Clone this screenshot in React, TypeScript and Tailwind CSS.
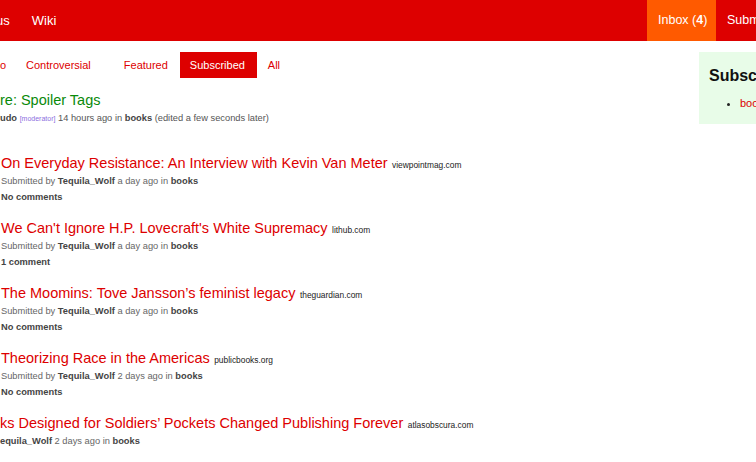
import React from "react";

const posts = [
  { title: "On Everyday Resistance: An Interview with Kevin Van Meter", domain: "viewpointmag.com", when: "a day ago", comments: "No comments" },
  { title: "We Can't Ignore H.P. Lovecraft's White Supremacy", domain: "lithub.com", when: "a day ago", comments: "1 comment" },
  { title: "The Moomins: Tove Jansson\u2019s feminist legacy", domain: "theguardian.com", when: "a day ago", comments: "No comments" },
  { title: "Theorizing Race in the Americas", domain: "publicbooks.org", when: "2 days ago", comments: "No comments" },
];

export default function App() {
  return (
    <div className="w-[756px] h-[462px] overflow-hidden bg-white text-[#333]" style={{ fontFamily: '"Liberation Sans", Arial, sans-serif' }}>
      <nav className="h-[41px] bg-[#dd0000] flex items-center text-white text-[13px] whitespace-nowrap overflow-hidden">
        <span className="-ml-[4px] pr-[11px]">us</span>
        <span className="px-[11px]">Wiki</span>
        <div className="flex-1" />
        <span className="h-full flex items-center bg-[#ff5a00] px-[11px] w-[69px] text-[12.5px]">Inbox (<b>4</b>)</span>
        <span className="h-full flex items-center pl-[11px] w-[40px] overflow-hidden text-[12.5px]">Submit</span>
      </nav>
      <div className="flex">
        <main className="w-[699px] shrink-0">
          <div className="mt-[11px] h-[26px] flex items-center text-[11px] text-[#dd0000] whitespace-nowrap">
            <span className="w-[16px]">o</span>
            <span className="px-[10px]">Controversial</span>
            <span className="px-[10px] ml-[13px]">Featured</span>
            <span className="h-full flex items-center px-[10px] ml-[2px] bg-[#dd0000] text-white w-[77px]">Subscribed</span>
            <span className="px-[11px]">All</span>
          </div>
          <div className="mt-[12px]">
            <div className="h-[20px] leading-[20px] text-[14.5px] text-[#0a8a0a]">re: Spoiler Tags</div>
            <div className="h-[16px] leading-[16px] text-[9.3px] text-[#555]">
              <b className="text-[#444]">udo</b> <span className="text-[7px] text-[#8c6fe0]">[moderator]</span> 14 hours ago in <b className="text-[#444]">books</b> (edited a few seconds later)
            </div>
          </div>
          <div className="mt-[27px] pl-[1px]">
            {posts.map((p) => (
              <div key={p.title} className="mb-[13px]">
                <div className="h-[20px] leading-[20px] whitespace-nowrap">
                  <span className="text-[14.5px] text-[#dd0000]">{p.title}</span>{" "}
                  <span className="text-[8.4px] text-[#222]">{p.domain}</span>
                </div>
                <div className="h-[16px] leading-[16px] text-[9.3px] text-[#666]">
                  Submitted by <b className="text-[#444]">Tequila_Wolf</b> {p.when} in <b className="text-[#444]">books</b>
                </div>
                <div className="h-[16px] leading-[16px] text-[9.3px] font-bold text-[#444]">{p.comments}</div>
              </div>
            ))}
            <div className="-ml-[1px]">
              <div className="h-[20px] leading-[20px] whitespace-nowrap">
                <span className="text-[14.5px] text-[#dd0000]">ks Designed for Soldiers’ Pockets Changed Publishing Forever</span>{" "}
                <span className="text-[8.4px] text-[#222]">atlasobscura.com</span>
              </div>
              <div className="h-[16px] leading-[16px] text-[9.3px] text-[#666]">
                <b className="text-[#444]">equila_Wolf</b> 2 days ago in <b className="text-[#444]">books</b>
              </div>
            </div>
          </div>
        </main>
        <aside className="mt-[11px] w-[200px] h-[72px] shrink-0 bg-[#e8fce8] pl-[10px] pt-[13px]">
          <h2 className="text-[16px] font-bold text-[#111] leading-[22px]">Subscriptions</h2>
          <ul className="mt-[8px] ml-[31px] list-disc text-[11px] leading-[16px]">
            <li className="text-[#222]"><span className="text-[#dd0000]">books</span></li>
          </ul>
        </aside>
      </div>
    </div>
  );
}
